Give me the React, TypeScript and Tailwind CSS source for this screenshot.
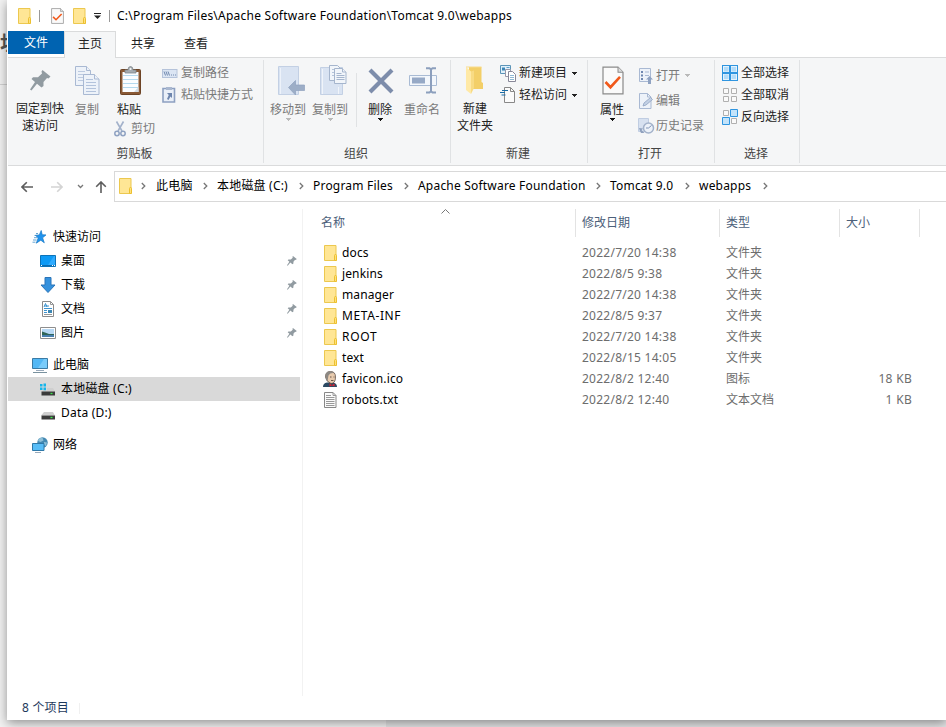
import React from 'react';

const Folder = () => (
  <svg width="14" height="16" viewBox="0 0 14 16">
    <path d="M.5.5h11.500v15H.5z" fill="#ffe695" stroke="#ecc84f" />
    <path d="M10.500 15.500v-5q0-1 1-1t1 1v5z" fill="#ffe07a" stroke="#ecc030" />
  </svg>
);

const Caret = ({ color = '#222' }) => (
  <svg width="6" height="3" viewBox="0 0 6 3" shapeRendering="crispEdges">
    <path d="M0 0h6L3 3z" fill={color} />
  </svg>
);

const CheckDoc = ({ w = 13, h = 16 }) => (
  <svg width={w} height={h} viewBox="0 0 22 28" preserveAspectRatio="none">
    <path d="M1 1h15l5 5v21H1z" fill="#fafafa" stroke="#8a8a8a" strokeWidth="1.2" />
    <path d="M16 1v5h5" fill="#ddd" stroke="#8a8a8a" strokeWidth="1" />
    <path d="M3.500 15.500l5 5L18 10.500" fill="none" stroke="#f1591b" strokeWidth="2.600" />
  </svg>
);

const Pin = ({ size = 21 }) => (
  <svg width={size} height={size} viewBox="0 0 21 21">
    <path d="M12.500 0L20.500 6.500 18.500 8.500 17 8 13.500 12 13.500 16 11.500 17.500 7 13.700 1.500 20.500 0 19.500 5 12 1.500 9 3 7.300 8 7.300 12 3.500 11.500 1.500z" fill="#919ba1" />
  </svg>
);

const CopyIcon = () => (
  <svg width="25" height="29" viewBox="0 0 25 29">
    <g fill="#edf2f9" stroke="#a9b9d3">
      <path d="M.5.5h11l4 4v15H.5z" />
      <path d="M11.500.5v4h4" />
      <path d="M3 5.500h7M3 8.500h10M3 11.500h10M3 14.500h10" stroke="#bccae0" />
      <path d="M8.500 8.500h11l4.500 4.500v15.500H8.500z" />
      <path d="M19.500 8.500v4.500H24" />
      <path d="M11 13.500h7M11 16.500h10M11 19.500h10M11 22.500h10M11 25.500h10" stroke="#b3c3dc" />
    </g>
  </svg>
);

const PasteIcon = () => (
  <svg width="21" height="29" viewBox="0 0 21 29">
    <rect x=".5" y="3.500" width="20" height="25" rx="1" fill="#8a5a36" stroke="#6d4426" />
    <path d="M2.500 6h16v20h-16z" fill="#fbfdff" />
    <path d="M3 9.500h15M3 13.500h15M3 17.500h15M3 21.500h15" stroke="#b4d9ee" />
    <path d="M5 7V4h3q0-3.500 2.500-3.500T13 4h3v3z" fill="#a5abb0" stroke="#7f868b" strokeWidth=".8" />
    <circle cx="10.500" cy="3" r="1" fill="#f5f6f7" />
    <path d="M18.500 21v5H14z" fill="#d3dce3" />
  </svg>
);

const Scissors = () => (
  <svg width="12" height="16" viewBox="0 0 12 16" fill="none">
    <path d="M2.500.5L8 10M9.500.5L4 10" stroke="#a3b2cb" strokeWidth="1.600" />
    <circle cx="3" cy="12.500" r="2.200" stroke="#8fa2c2" strokeWidth="1.500" />
    <circle cx="9" cy="12.500" r="2.200" stroke="#8fa2c2" strokeWidth="1.500" />
  </svg>
);

const PathIcon = () => (
  <svg width="16" height="9" viewBox="0 0 16 9">
    <rect x=".5" y=".5" width="14.500" height="8" fill="#dbe5f3" stroke="#b5c3da" />
    <path d="M2 2.500l1.500 4M4 2.500l1.500 4M6 2.500l1.500 4" fill="none" stroke="#7088ae" />
    <path d="M9 6h1M11 6h1M13 6h1" stroke="#7088ae" />
  </svg>
);

const ShortcutIcon = () => (
  <svg width="14" height="16" viewBox="0 0 14 16">
    <path d="M1 1.500h11.500v13.500H1z" fill="#e9eff8" stroke="#8da0c1" strokeWidth="1.600" />
    <path d="M4 0h6v3H4z" fill="#a9b7cf" />
    <path d="M5 6h5v5L8.500 9.500 6.500 13 5 12 6.800 8z" fill="#6d85ad" />
  </svg>
);

const MoveIcon = () => (
  <svg width="27" height="30" viewBox="0 0 27 30">
    <path d="M.5.5h20v28H.5z" fill="#d9e3f2" stroke="#c3d0e4" />
    <path d="M2.500 2v26" stroke="#edf2fa" />
    <path d="M10.500 21.500l7-7v4.500h9v5.500h-9v4.500z" fill="#9daec7" stroke="#8fa2be" strokeWidth=".7" />
  </svg>
);

const CopyToIcon = () => (
  <svg width="27" height="31" viewBox="0 0 27 31">
    <path d="M.5 2.500h22v27H.5z" fill="#d9e3f2" stroke="#c3d0e4" />
    <path d="M2.500 4v25M18.500 22v7" stroke="#f0f4fa" />
    <g fill="#f1f5fa" stroke="#a5b5cd">
      <path d="M9.500.5h8l3 3v12h-11z" />
      <path d="M12 4.500h5M12 7.500h6M12 10.500h6" stroke="#b5c4da" />
      <path d="M14.500 3.500h8l3.500 3.500v11.500H14.500z" />
      <path d="M22.500 3.500V7H26M16.500 8.500h5M16.500 10.500h8M16.500 12.500h8M16.500 14.500h8" />
    </g>
  </svg>
);

const DeleteIcon = () => (
  <svg width="26" height="26" viewBox="0 0 26 26">
    <path d="M2 2l22 22M24 2L2 24" stroke="#7d8dab" strokeWidth="4.200" />
  </svg>
);

const RenameIcon = () => (
  <svg width="29" height="27" viewBox="0 0 29 27" fill="none">
    <path d="M.5 8.500h27v10H.5z" fill="#f3f7fc" stroke="#a9bbd4" />
    <path d="M3 10.500h13v6H3z" fill="#96a9c6" />
    <path d="M17 1.200h3.500L22 2.500 23.500 1.200H27M17 25.500h3.500l1.500-1.300 1.500 1.300H27M22 2.500v22" stroke="#8c9fbd" strokeWidth="2" />
  </svg>
);

const NewFolderIcon = () => (
  <svg width="20" height="29" viewBox="0 0 20 29">
    <path d="M4 1h12.500v15l1.500 1v6H4z" fill="#f3cf68" />
    <path d="M1 1l5 4.500V28L1 24z" fill="#ffe9a6" />
    <path d="M6 5.500l3-1V22l-3 6z" fill="#f8db84" />
    <path d="M1 1h15.500" stroke="#f9dc8b" />
  </svg>
);

const NewItemIcon = () => (
  <svg width="16" height="17" viewBox="0 0 16 17">
    <path d="M.5.5h10v8H.5z" fill="#e1f1fb" stroke="#5b94b8" />
    <path d="M2 2.500h3v3H2z" fill="#3b86b7" />
    <path d="M6.500 2.500h3" stroke="#3b86b7" strokeWidth=".8" />
    <path d="M5.500 4.500h5v7h-5z" fill="#fff" stroke="#99a" />
    <path d="M8.500 6.500h4l3 3v7h-7z" fill="#fff" stroke="#889" />
    <path d="M10 10.500h4M10 12.500h4M10 14.500h4" stroke="#8eb9d4" />
  </svg>
);

const EasyAccessIcon = () => (
  <svg width="16" height="16" viewBox="0 0 16 16">
    <path d="M4.500.5h6l4 4v11h-10z" fill="#fbfbfb" stroke="#888" />
    <path d="M10.500.5v4h4" fill="none" stroke="#888" />
    <path d="M2 3.500h6M0 5.500h5M1.500 8h4" stroke="#1c6ea8" strokeWidth="1.200" />
  </svg>
);

const OpenIcon = () => (
  <svg width="14" height="16" viewBox="0 0 14 16">
    <path d="M.5.5h11v13H.5z" fill="#edf2f9" stroke="#a9b9d3" />
    <path d="M2 3h2v2H2zM2 6.500h2v2H2zM2 10h2v2H2z" fill="#6f87b0" />
    <path d="M6 4h4M6 7.500h4" stroke="#a9b9d3" />
    <path d="M10.500 8l3.500 3.500h-2V16H9v-4.500H7z" fill="#8fa2c2" />
  </svg>
);

const EditIcon = () => (
  <svg width="14" height="16" viewBox="0 0 14 16">
    <path d="M.5.5h8l3.500 3.500v11.500H.5z" fill="#edf2f9" stroke="#a9b9d3" />
    <path d="M8.500.5V4H12" fill="none" stroke="#a9b9d3" />
    <path d="M4 13l1-3 6.500-5.500 2 2L7 12z" fill="#c2d0e4" stroke="#8fa2c2" strokeWidth=".8" />
  </svg>
);

const HistoryIcon = () => (
  <svg width="17" height="16" viewBox="0 0 17 16">
    <path d="M.5.5h10v13H.5z" fill="#d7e1f0" stroke="#c0cde2" />
    <circle cx="10.500" cy="10" r="5" fill="#edf2f9" stroke="#a3b2ca" strokeWidth="1.500" />
    <path d="M10.500 10l3-2.500M8 10h2.500" stroke="#7f93b6" />
    <path d="M1 10l4 .5-1.500 1.500 3 3H3L2 13z" fill="#90a1bd" />
  </svg>
);

const SelectAllIcon = () => (
  <svg width="16" height="16" viewBox="0 0 16 16">
    <path d="M0 0h16v16H0z" fill="#2f95e0" />
    <path d="M1 1h6v6H1zM9 1h6v6H9zM1 9h6v6H1zM9 9h6v6H9z" fill="#e4f3fd" />
    <path d="M2 2h4.500v4.500H2zM9.500 2H14v4.500H9.500zM2 9.500h4.500V14H2zM9.500 9.500H14V14H9.500z" fill="#b3dcf9" />
  </svg>
);

const SelectNoneIcon = () => (
  <svg width="16" height="16" viewBox="0 0 16 16" fill="#fafafa" stroke="#b0b0b0">
    <path d="M1.500 1.500h5v5h-5zM9.500 1.500h5v5h-5zM1.500 9.500h5v5h-5zM9.500 9.500h5v5h-5z" />
  </svg>
);

const InvertIcon = () => (
  <svg width="16" height="16" viewBox="0 0 16 16">
    <path d="M1.500 1.500h5v5h-5zM9.500 9.500h5v5h-5z" fill="#fafafa" stroke="#b0b0b0" />
    <path d="M8.500.5h7v7h-7zM.5 8.500h7v7H.5z" fill="#c3e3fa" stroke="#2f95e0" />
  </svg>
);

const StarIcon = () => (
  <svg width="16" height="14" viewBox="0 0 16 14">
    <path d="M9.200.5l1 4.200 3.800.2-3.400 2.900 1.700 5L8.800 10.200l-4.500 3 1.900-5.200L3.500 5.300l3.800-.4z" fill="#1f93ee" stroke="#1879c4" strokeWidth=".7" />
    <path d="M4 3.500h2M2.500 5.500h2M2 7.700h3M1 10h3.500M.5 12.200h3" stroke="#3c8ec9" strokeWidth=".8" />
  </svg>
);

const DesktopIcon = () => (
  <svg width="16" height="12" viewBox="0 0 16 12">
    <path d="M.5.5h15v11H.5z" fill="#0e9af5" stroke="#0d73b8" />
    <path d="M1 10.500h14" stroke="#0c6cb0" />
    <path d="M1 10.500h1M12 10.500h1M14 10.500h1" stroke="#fff" />
    <path d="M8 10L14 1h1v9z" fill="#2fabff" />
  </svg>
);

const DownloadIcon = () => (
  <svg width="16" height="16" viewBox="0 0 16 16">
    <path d="M5 .5h6v7.500h4L8 15.500 1 8h4z" fill="#3491dd" stroke="#2a74b8" />
  </svg>
);

const DocumentIcon = () => (
  <svg width="12" height="16" viewBox="0 0 12 16">
    <path d="M.5.5h8l3 3v12H.5z" fill="#fff" stroke="#8b8b8b" />
    <path d="M8.500.5v3h3" fill="none" stroke="#999" />
    <path d="M2 6L3.500 2.500 5 6M2.500 5H7M2 7.500h8M2 9.500h3M2 11.500h3" fill="none" stroke="#2788cb" strokeWidth=".9" />
    <path d="M6 9h4v3H6z" fill="#3c87b4" />
    <path d="M2 13.500h8" stroke="#999" />
  </svg>
);

const PictureIcon = () => (
  <svg width="16" height="12" viewBox="0 0 16 12">
    <path d="M.5.5h15v11H.5z" fill="#fff" stroke="#8e8e8e" />
    <path d="M2 2h12v8H2z" fill="#b7d8f4" />
    <path d="M2 4.500l3 1 4 1.500h5v1.500H2z" fill="#2f6558" />
    <path d="M2 8h12v2H2z" fill="#487fae" />
  </svg>
);

const ComputerIcon = () => (
  <svg width="16" height="15" viewBox="0 0 16 15">
    <path d="M.5.5h15v10H.5z" fill="#53b8f5" stroke="#3a7ba5" />
    <path d="M6 10L12 1h3v9z" fill="#79ccfb" />
    <path d="M4 12.500h8" stroke="#9ab" />
    <path d="M1 14.500h14" stroke="#7a929f" />
  </svg>
);

const DriveIcon = ({ windows = false }) => (
  <svg width="16" height="13" viewBox="0 0 16 13">
    {windows && <path d="M0 1h2.500v2.500H0zM3.500.500H6v3H3.500zM0 4.500h2.500V7H0zM3.500 4.500H6v3H3.500z" fill="#16b5ea" />}
    <path d={windows ? 'M7 5h6l2 3.500H2l.5-1H7z' : 'M4 5h9l2 3.500H1z'} fill="#cfcfcf" />
    <path d="M1.500 8.500H15v4H1.500z" fill="#3b3b3b" />
    <path d="M10.500 10.500h2" stroke="#3be84b" strokeWidth="1.300" />
  </svg>
);

const NetworkIcon = () => (
  <svg width="16" height="16" viewBox="0 0 16 16">
    <circle cx="10.500" cy="5.500" r="5.200" fill="#4489b2" />
    <path d="M7 1.500l3.500-1 1 3-3 1.500-2.500-1zM12 5l3 .5-1 3.500-2-1z" fill="#8fc0d8" />
    <path d="M.5 6.500h11.500v7H.5z" fill="#58bdf7" stroke="#2e78a8" />
    <path d="M3 15.500h6" stroke="#9ab" />
  </svg>
);

const JenkinsIcon = () => (
  <svg width="14" height="16" viewBox="0 0 14 16">
    <path d="M0 16q0-4 4-4.500h6q4 .5 4 4.500z" fill="#2c4a63" />
    <path d="M2.500 6Q2.500 .5 7.500.5T12.500 6q0 6.500-4.500 6.500Q3.500 11 2.500 6z" fill="#e8cbae" stroke="#4a3b33" strokeWidth=".7" />
    <path d="M3 9Q.5.3 7 .3 10 .3 11 2.200 7 1.700 5.500 4.500L4.500 10z" fill="#8d8984" />
    <path d="M7 6h1.500M10.500 6h1M8 9.500h2.500" stroke="#5b4740" strokeWidth=".9" />
    <path d="M6.500 12.500L9 14l2.500-1.500v3L9 14.500l-2.500 1z" fill="#d8232f" />
  </svg>
);

const TextIcon = () => (
  <svg width="13" height="16" viewBox="0 0 13 16">
    <path d="M.5.5h8.500l3 3v12H.5z" fill="#fbfbfb" stroke="#888" />
    <path d="M9 .5v3h3M2 3.500h5M2 5.500h8.500M2 7.500h8.500M2 9.500h8.500M2 11.500h8.500M2 13.500h8.500" fill="none" stroke="#999" />
  </svg>
);

const Arrow = ({ color = '#5d5d5d', up = false }) => (
  <svg width="12" height="12" viewBox="0 0 12 12" fill="none" stroke={color} strokeWidth="1.600">
    {up ? <path d="M6 12V1M1.200 5.800L6 1l4.800 4.800" /> : <path d="M12 6H1M5.800 1.200L1 6l4.800 4.800" />}
  </svg>
);

type BigProps = {
  icon: React.ReactNode;
  label: string;
  second?: string;
  className: string;
  disabled?: boolean;
  caret?: boolean;
};

const BigButton = ({ icon, label, second, className, disabled, caret }: BigProps) => (
  <div className={`flex shrink-0 flex-col items-center whitespace-nowrap ${disabled ? 'text-[#7a7a7a]' : 'text-[#222]'} ${className}`}>
    <div className="flex h-[41px] items-center justify-center">{icon}</div>
    <div className={second ? 'leading-[16px]' : 'leading-[17px]'}>{label}</div>
    {second && <div className="leading-[18px]">{second}</div>}
    {caret && <Caret color={disabled ? '#b9b9b9' : '#111'} />}
  </div>
);

type SmallProps = {
  icon: React.ReactNode;
  label: string;
  disabled?: boolean;
  caret?: boolean;
  tall?: boolean;
};

const SmallButton = ({ icon, label, disabled, caret, tall }: SmallProps) => (
  <div className={`flex items-center whitespace-nowrap ${tall ? 'h-[25px]' : 'h-[22px]'} ${disabled ? 'text-[#7a7a7a]' : 'text-[#222]'}`}>
    <div className={`flex shrink-0 items-center ${tall ? 'w-[18px] pl-px' : 'w-[19px]'}`}>{icon}</div>
    <span className="mr-1">{label}</span>
    {caret && <Caret color={disabled ? '#b9b9b9' : '#222'} />}
  </div>
);

const Group = ({ title, className, children }: { title: string; className: string; children: React.ReactNode }) => (
  <div className={`flex h-[103px] shrink-0 flex-col border-r border-[#e0e2e4] ${className}`}>
    <div className="flex h-[86px]">{children}</div>
    <div className="pr-[2px] text-center leading-[16px] text-[#444]">{title}</div>
  </div>
);

const Chevron = ({ className = '' }) => (
  <svg width="5" height="8" viewBox="0 0 5 8" className={`shrink-0 ${className}`}>
    <path d="M.8 1L3.800 4 .8 7" fill="none" stroke="#777" strokeWidth="1.300" />
  </svg>
);

const crumbs = [
  { label: '此电脑', width: 'w-[61px]' },
  { label: '本地磁盘 (C:)', width: 'w-[96px]' },
  { label: 'Program Files', width: 'w-[105px]' },
  { label: 'Apache Software Foundation', width: 'w-[192px]' },
  { label: 'Tomcat 9.0', width: 'w-[89px]' },
  { label: 'webapps', width: 'w-[78px]' },
];

const quickAccess = [
  { label: '桌面', icon: <DesktopIcon /> },
  { label: '下载', icon: <DownloadIcon /> },
  { label: '文档', icon: <DocumentIcon /> },
  { label: '图片', icon: <PictureIcon /> },
];

const files = [
  { name: 'docs', date: '2022/7/20 14:38', type: '文件夹', size: '', icon: <Folder /> },
  { name: 'jenkins', date: '2022/8/5 9:38', type: '文件夹', size: '', icon: <Folder /> },
  { name: 'manager', date: '2022/7/20 14:38', type: '文件夹', size: '', icon: <Folder /> },
  { name: 'META-INF', date: '2022/8/5 9:37', type: '文件夹', size: '', icon: <Folder /> },
  { name: 'ROOT', date: '2022/7/20 14:38', type: '文件夹', size: '', icon: <Folder /> },
  { name: 'text', date: '2022/8/15 14:05', type: '文件夹', size: '', icon: <Folder /> },
  { name: 'favicon.ico', date: '2022/8/2 12:40', type: '图标', size: '18 KB', icon: <div className="-ml-px"><JenkinsIcon /></div> },
  { name: 'robots.txt', date: '2022/8/2 12:40', type: '文本文档', size: '1 KB', icon: <TextIcon /> },
];

const nameTracking = (name: string) => {
  if (name === 'META-INF') return 'tracking-[0.6px]';
  if (name === 'ROOT') return 'tracking-[0.7px]';
  return 'tracking-[0.12px]';
};

type NavProps = { icon: React.ReactNode; label: string; child?: boolean; pinned?: boolean; selected?: boolean };

const NavItem = ({ icon, label, child, pinned, selected }: NavProps) => (
  <div className={`flex h-6 items-center pr-[3px] ${child ? 'pl-8' : 'pl-6'} ${selected ? 'bg-[#d9d9d9]' : ''}`}>
    <div className="mr-[5px] flex w-4 justify-center">{icon}</div>
    <span className={`flex-1 ${label.includes('(') ? 'tracking-[0.2px]' : ''}`}>{label}</span>
    {pinned && <Pin size={10} />}
  </div>
);

const Ribbon = () => (
  <div className="ml-px flex h-[108px] border-b border-[#dadbdc] bg-[#f5f6f7] pt-[2px]">
    <Group title="剪贴板" className="w-[256px]">
      <BigButton icon={<Pin />} label="固定到快" second="速访问" className="w-16" />
      <BigButton icon={<div className="pl-px"><CopyIcon /></div>} label="复制" disabled className="w-[30px]" />
      <div className="w-[54px]">
        <BigButton icon={<div className="pl-[2px]"><PasteIcon /></div>} label="粘贴" className="w-[54px]" />
        <div className="flex h-[22px] items-center pl-3 text-[#7a7a7a]">
          <Scissors />
          <span className="ml-[5px] whitespace-nowrap">剪切</span>
        </div>
      </div>
      <div className="ml-[6px] pt-[2px]">
        <SmallButton icon={<PathIcon />} label="复制路径" disabled />
        <SmallButton icon={<ShortcutIcon />} label="粘贴快捷方式" disabled />
      </div>
    </Group>
    <Group title="组织" className="w-[187px]">
      <BigButton icon={<div className="pl-[7px]"><MoveIcon /></div>} label="移动到" disabled caret className="ml-[3px] w-[42px]" />
      <BigButton icon={<div className="pl-[6px]"><CopyToIcon /></div>} label="复制到" disabled caret className="w-[42px]" />
      <div className="mt-[13px] ml-[5px] h-[54px] w-px bg-[#e0e2e4]" />
      <BigButton icon={<div className="pl-[2px]"><DeleteIcon /></div>} label="删除" caret className="w-[46px]" />
      <BigButton icon={<div className="pl-[3px]"><RenameIcon /></div>} label="重命名" disabled className="w-[38px]" />
    </Group>
    <Group title="新建" className="w-[137px]">
      <BigButton icon={<NewFolderIcon />} label="新建" second="文件夹" className="w-12" />
      <div className="ml-px pt-[2px]">
        <SmallButton icon={<NewItemIcon />} label="新建项目" caret />
        <SmallButton icon={<EasyAccessIcon />} label="轻松访问" caret />
      </div>
    </Group>
    <Group title="打开" className="w-[127px]">
      <BigButton icon={<div className="pl-px"><CheckDoc w={22} h={29} /></div>} label="属性" caret className="w-12" />
      <div className="ml-[2px] pt-[3px]">
        <SmallButton icon={<OpenIcon />} label="打开" disabled caret tall />
        <SmallButton icon={<EditIcon />} label="编辑" disabled tall />
        <SmallButton icon={<div className="-ml-px"><HistoryIcon /></div>} label="历史记录" disabled tall />
      </div>
    </Group>
    <Group title="选择" className="w-[85px]">
      <div className="ml-[7px] pt-[2px]">
        <SmallButton icon={<SelectAllIcon />} label="全部选择" />
        <SmallButton icon={<SelectNoneIcon />} label="全部取消" />
        <SmallButton icon={<InvertIcon />} label="反向选择" />
      </div>
    </Group>
  </div>
);

const App = () => {
  return (
    <div
      style={{ fontFamily: '"Noto Sans", "Noto Sans CJK SC", sans-serif' }}
      className="relative flex h-[727px] w-[946px] overflow-hidden bg-[#f2f2f2] text-[12px] leading-[16px] text-black"
    >
      {/* Page behind the window */}
      <div className="absolute right-0 bottom-0 h-4 w-[560px] bg-[#e3e4e5]" />
      <div className="h-[727px] w-[7px] shrink-0 overflow-hidden">
        <div className="h-[85px] border-b border-[#d2d2d2] pt-[32px]">
          <div className="w-5 text-[20px] leading-[24px] font-bold text-[#555]">址</div>
        </div>
      </div>

      <div className="relative flex h-[720px] w-[939px] shrink-0 flex-col bg-white shadow-[0_3px_10px_rgba(0,0,0,0.4)]">
        {/* Title bar */}
        <div className="flex h-[31px] shrink-0 items-center pl-[11px]">
          <Folder />
          <div className="ml-[7px] h-3 w-px bg-[#999]" />
          <div className="ml-[11px]"><CheckDoc /></div>
          <div className="ml-[9px]"><Folder /></div>
          <svg width="7" height="6" viewBox="0 0 7 6" className="ml-[7px]">
            <path d="M0 .5h7" stroke="#222" />
            <path d="M0 2.500h7L3.500 6z" fill="#222" />
          </svg>
          <div className="ml-[8px] h-3 w-px bg-[#999]" />
          <span className="ml-[7px] tracking-[0.235px]">C:\Program Files\Apache Software Foundation\Tomcat 9.0\webapps</span>
        </div>

        {/* Tabs */}
        <div className="ml-px flex h-[27px] shrink-0 text-[#222]">
          <div className="flex w-14 flex-col border-b border-[#dadbdc]">
            <div className="h-[23px] bg-[#0063b1] text-center leading-[24px] text-white">文件</div>
          </div>
          <div className="w-[52px] border-x border-t border-[#dadbdc] bg-[#f5f6f7] text-center leading-[24px]">主页</div>
          <div className="flex flex-1 border-b border-[#dadbdc] leading-[26px]">
            <span className="ml-[15px]">共享</span>
            <span className="ml-[29px]">查看</span>
          </div>
        </div>

        <Ribbon />

        {/* Address bar */}
        <div className="flex h-[39px] shrink-0 pt-[5px] pl-[14px]">
          <div className="flex h-[31px] w-[93px] items-center">
            <Arrow />
            <div className="ml-[18px] rotate-180"><Arrow color="#d4d4d4" /></div>
            <svg width="7" height="5" viewBox="0 0 7 5" className="ml-[14px]">
              <path d="M1 1l2.500 2.500L6 1" fill="none" stroke="#777" strokeWidth="1.300" />
            </svg>
            <div className="ml-[11px]"><Arrow up /></div>
          </div>
          <div className="flex h-[31px] flex-1 items-center border-y border-l border-[#d9d9d9] pb-px pl-1">
            <Folder />
            <Chevron className="mr-[10px] ml-[8px]" />
            {crumbs.map((c) => (
              <div key={c.label} className={`flex shrink-0 items-center justify-between whitespace-nowrap ${c.width}`}>
                <span className="tracking-[0.2px]">{c.label}</span>
                <Chevron className="mr-[9px]" />
              </div>
            ))}
          </div>
        </div>

        {/* Body */}
        <div className="flex h-[491px] shrink-0 pt-1 pl-px">
          <div className="w-[292px] pt-4">
            <NavItem icon={<StarIcon />} label="快速访问" />
            {quickAccess.map((q) => (
              <NavItem key={q.label} icon={q.icon} label={q.label} child pinned />
            ))}
            <div className="h-2" />
            <NavItem icon={<ComputerIcon />} label="此电脑" />
            <NavItem icon={<DriveIcon windows />} label="本地磁盘 (C:)" child selected />
            <NavItem icon={<DriveIcon />} label="Data (D:)" child />
            <div className="h-2" />
            <NavItem icon={<NetworkIcon />} label="网络" />
          </div>

          <div className="ml-[2px] flex-1 border-l border-[#f2f2f2]">
            <div className="relative flex h-[28px] leading-[28px] text-[#4c607a]">
              <svg width="9" height="5" viewBox="0 0 9 5" className="absolute top-0 left-[138px]">
                <path d="M.5 4.500l4-4 4 4" fill="none" stroke="#777" />
              </svg>
              <div className="w-[273px] border-r border-[#e3e3e3] pl-[18px]">名称</div>
              <div className="w-[144px] border-r border-[#e3e3e3] pl-[6px]">修改日期</div>
              <div className="w-[120px] border-r border-[#e3e3e3] pl-[6px]">类型</div>
              <div className="w-[80px] border-r border-[#e3e3e3] pl-[6px]">大小</div>
            </div>
            <div className="pt-[5px]">
              {files.map((f) => (
                <div key={f.name} className="flex h-[21px] items-center text-[#6d6d6d]">
                  <div className="flex w-[39px] pl-[21px]">{f.icon}</div>
                  <div className={`w-[240px] text-black ${nameTracking(f.name)}`}>{f.name}</div>
                  <div className="w-[144px] tracking-[0.25px]">{f.date}</div>
                  <div className="w-[120px]">{f.type}</div>
                  <div className="w-[66px] text-right tracking-[0.3px]">{f.size}</div>
                </div>
              ))}
            </div>
          </div>
        </div>

        {/* Status bar */}
        <div className="flex h-[24px] shrink-0 items-center pl-[15px] text-[#1e395b]">
          <span className="w-[57px] tracking-[0.2px]">8 个项目</span>
          <div className="h-[11px] w-px bg-[#f0f0f0]" />
        </div>
      </div>
    </div>
  );
};

export default App;
